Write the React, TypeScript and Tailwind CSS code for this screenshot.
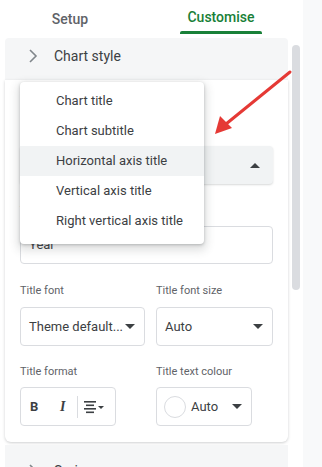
import React from 'react';

const font = { fontFamily: 'Roboto, "Noto Sans", Arial, sans-serif' };

function Caret({ up = false }: { up?: boolean }) {
	return (
		<svg width="10" height="5" viewBox="0 0 10 5" className="shrink-0">
			{up ? <path d="M0 5 L5 0 L10 5 Z" fill="#3c4043" /> : <path d="M0 0 L10 0 L5 5 Z" fill="#3c4043" />}
		</svg>
	);
}

function Chevron() {
	return (
		<svg width="10" height="16" viewBox="0 0 10 16" className="shrink-0">
			<path d="M2 2 L8 8 L2 14" stroke="#80868b" strokeWidth="1.6" fill="none" />
		</svg>
	);
}

function Label({ children }: { children: React.ReactNode }) {
	return <div className="text-[11px] leading-[14px] text-[#5f6368]">{children}</div>;
}

const menuItems = ['Chart title', 'Chart subtitle', 'Horizontal axis title', 'Vertical axis title', 'Right vertical axis title'];

export default function App() {
	return (
		<div className="relative flex h-[467px] w-[322px] overflow-hidden bg-white" style={font}>
			<div className="flex w-[303px] flex-col bg-white">
				{/* tabs */}
				<div className="flex h-[38px] shrink-0">
					<div className="flex w-[140px] items-center justify-center text-[14px] font-medium text-[#5f6368]">Setup</div>
					<div className="flex w-[162px] flex-col items-center justify-end">
						<div className="text-[14px] font-medium leading-[20px] text-[#188038]">Customise</div>
						<div className="mt-[4px] mb-[4px] h-[3px] w-[82px] rounded-t-[2px] bg-[#188038]"></div>
					</div>
				</div>

				<div className="flex flex-1 gap-[4px] pl-[5px]">
					<div className="flex w-[283px] flex-col">
						{/* chart style */}
						<div className="flex h-[42px] shrink-0 items-center gap-[16px] rounded-t-[4px] bg-[#f5f6f7] pb-[6px] pl-[23px] text-[14px] text-[#3c4043]">
							<Chevron />
							<span>Chart style</span>
						</div>

						{/* open section card */}
						<div className="flex shrink-0 flex-col rounded-b-[6px] bg-white px-[15px] pt-[66px] pb-[16px] shadow-[0_1px_3px_rgba(60,64,67,0.25)]">
							<div className="flex h-[38px] items-center justify-end rounded-[4px] bg-[#f1f3f4] pr-[13px] shadow-[0_1px_2px_rgba(60,64,67,0.2)]">
								<Caret up />
							</div>
							<div className="mt-[20px] mb-[8px]">
								<Label>Title text</Label>
							</div>
							<div className="flex h-[38px] items-center rounded-[4px] border border-[#dadce0] px-[8px] text-[13px] text-[#3c4043]">Year</div>

							<div className="mt-[20px] grid grid-cols-[125px_117px] gap-x-[11px]">
								<Label>Title font</Label>
								<Label>Title font size</Label>
								<div className="mt-[9px] flex h-[39px] items-center justify-between rounded-[4px] border border-[#dadce0] pl-[8px] pr-[9px] text-[13px] text-[#3c4043]">
									<span>Theme default...</span>
									<Caret />
								</div>
								<div className="mt-[9px] flex h-[39px] items-center justify-between rounded-[4px] border border-[#dadce0] pl-[8px] pr-[9px] text-[13px] text-[#3c4043]">
									<span>Auto</span>
									<Caret />
								</div>
							</div>

							<div className="mt-[19px] grid grid-cols-[125px_117px] gap-x-[11px]">
								<Label>Title format</Label>
								<Label>Title text colour</Label>
								<div className="mt-[8px] flex h-[39px] w-[96px] items-center rounded-[4px] border border-[#dadce0] pl-[9px]">
									<span className="w-[20px] text-[13px] font-bold text-[#3c4043]">B</span>
									<span className="ml-[10px] w-[14px] text-[14px] font-bold italic text-[#3c4043]" style={{ fontFamily: '"Liberation Serif", serif' }}>I</span>
									<div className="ml-[3px] h-[22px] w-px bg-[#dadce0]"></div>
									<svg width="22" height="14" viewBox="0 0 22 14" className="ml-[6px]">
										<rect x="0" y="1" width="12" height="1.6" fill="#3c4043" />
										<rect x="2" y="4.5" width="8" height="1.6" fill="#3c4043" />
										<rect x="0" y="8" width="12" height="1.6" fill="#3c4043" />
										<rect x="2" y="11.5" width="8" height="1.6" fill="#3c4043" />
										<path d="M14 6 L20 6 L17 9 Z" fill="#3c4043" />
									</svg>
								</div>
								<div className="mt-[8px] flex h-[39px] w-[96px] items-center rounded-[4px] border border-[#dadce0] pl-[7px]">
									<div className="h-[22px] w-[22px] rounded-full border border-[#dadce0] bg-white"></div>
									<span className="ml-[5px] text-[13px] text-[#3c4043]">Auto</span>
									<div className="ml-[14px]">
										<Caret />
									</div>
								</div>
							</div>
						</div>

						{/* series */}
						<div className="mt-[3px] flex h-[42px] shrink-0 items-start gap-[16px] bg-[#f5f6f7] pl-[23px] pt-[16px] text-[14px] leading-[20px] text-[#3c4043]">
							<div className="pt-[2px]">
								<Chevron />
							</div>
							<span>Series</span>
						</div>
					</div>

					{/* scrollbar */}
					<div className="pt-[7px]">
						<div className="h-[245px] w-[8px] rounded-full bg-[#dadce0]"></div>
					</div>
				</div>
			</div>
			<div className="flex-1 bg-[#f8f9fa]"></div>

			{/* open dropdown menu */}
			<div className="absolute left-[20px] top-[82px] w-[184px] rounded-[4px] bg-white pt-[4px] pb-[8px] shadow-[0_1px_3px_rgba(60,64,67,0.3),0_4px_8px_3px_rgba(60,64,67,0.15)]">
				{menuItems.map((item) => (
					<div
						key={item}
						className={`flex h-[30px] items-center pl-[36px] text-[13px] text-[#3c4043] ${item === 'Horizontal axis title' ? 'bg-[#f1f3f4]' : ''}`}
					>
						{item}
					</div>
				))}
			</div>

			{/* annotation arrow */}
			<svg className="pointer-events-none absolute left-0 top-0" width="322" height="467" viewBox="0 0 322 467">
				<line x1="290" y1="72" x2="226" y2="124" stroke="#e53935" strokeWidth="3" strokeLinecap="round" />
				<path d="M215 134 L220 116 L232 128 Z" fill="#e53935" />
			</svg>
		</div>
	);
}
